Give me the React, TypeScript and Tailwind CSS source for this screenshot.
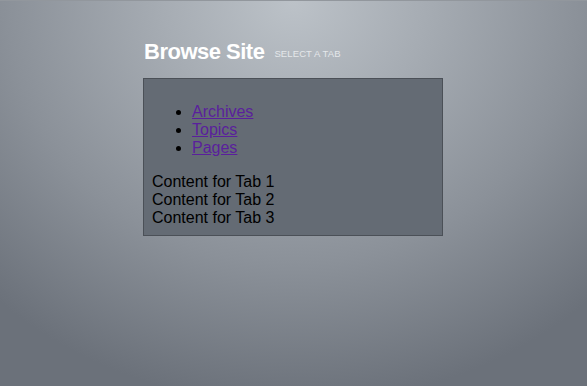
export default function App() {
  const tabs = ["Archives", "Topics", "Pages"];
  return (
    <div
      className="min-h-screen h-[386px] border-t border-[#92979d] bg-[radial-gradient(ellipse_75%_105%_at_50%_0%,#bcc2c8_0%,#a6acb3_30%,#8b9199_65%,#6b717a_100%)]"
      style={{ fontFamily: '"Liberation Sans", Arial, sans-serif' }}
    >
      <div className="pl-[143px] pt-[38px]">
        <div className="flex items-baseline gap-[10px] h-[39px]">
          <h1 className="text-[22px] font-bold tracking-[-0.5px] text-white leading-[26px] pl-px">
            Browse Site
          </h1>
          <span className="relative -top-[2px] text-[9.5px] tracking-[0.1px] uppercase text-[#e4e7ea]">
            Select a tab
          </span>
        </div>
        <div className="w-[300px] border border-[#4b5057] bg-[#646b74] p-2 text-[16px] leading-[18px] text-black">
          <ul className="list-disc pl-10 my-4">
            {tabs.map(t => (
              <li key={t}>
                <a href="#" className="text-[#5a1f9c] underline">
                  {t}
                </a>
              </li>
            ))}
          </ul>
          <div>Content for Tab 1</div>
          <div>Content for Tab 2</div>
          <div>Content for Tab 3</div>
        </div>
      </div>
    </div>
  );
}
